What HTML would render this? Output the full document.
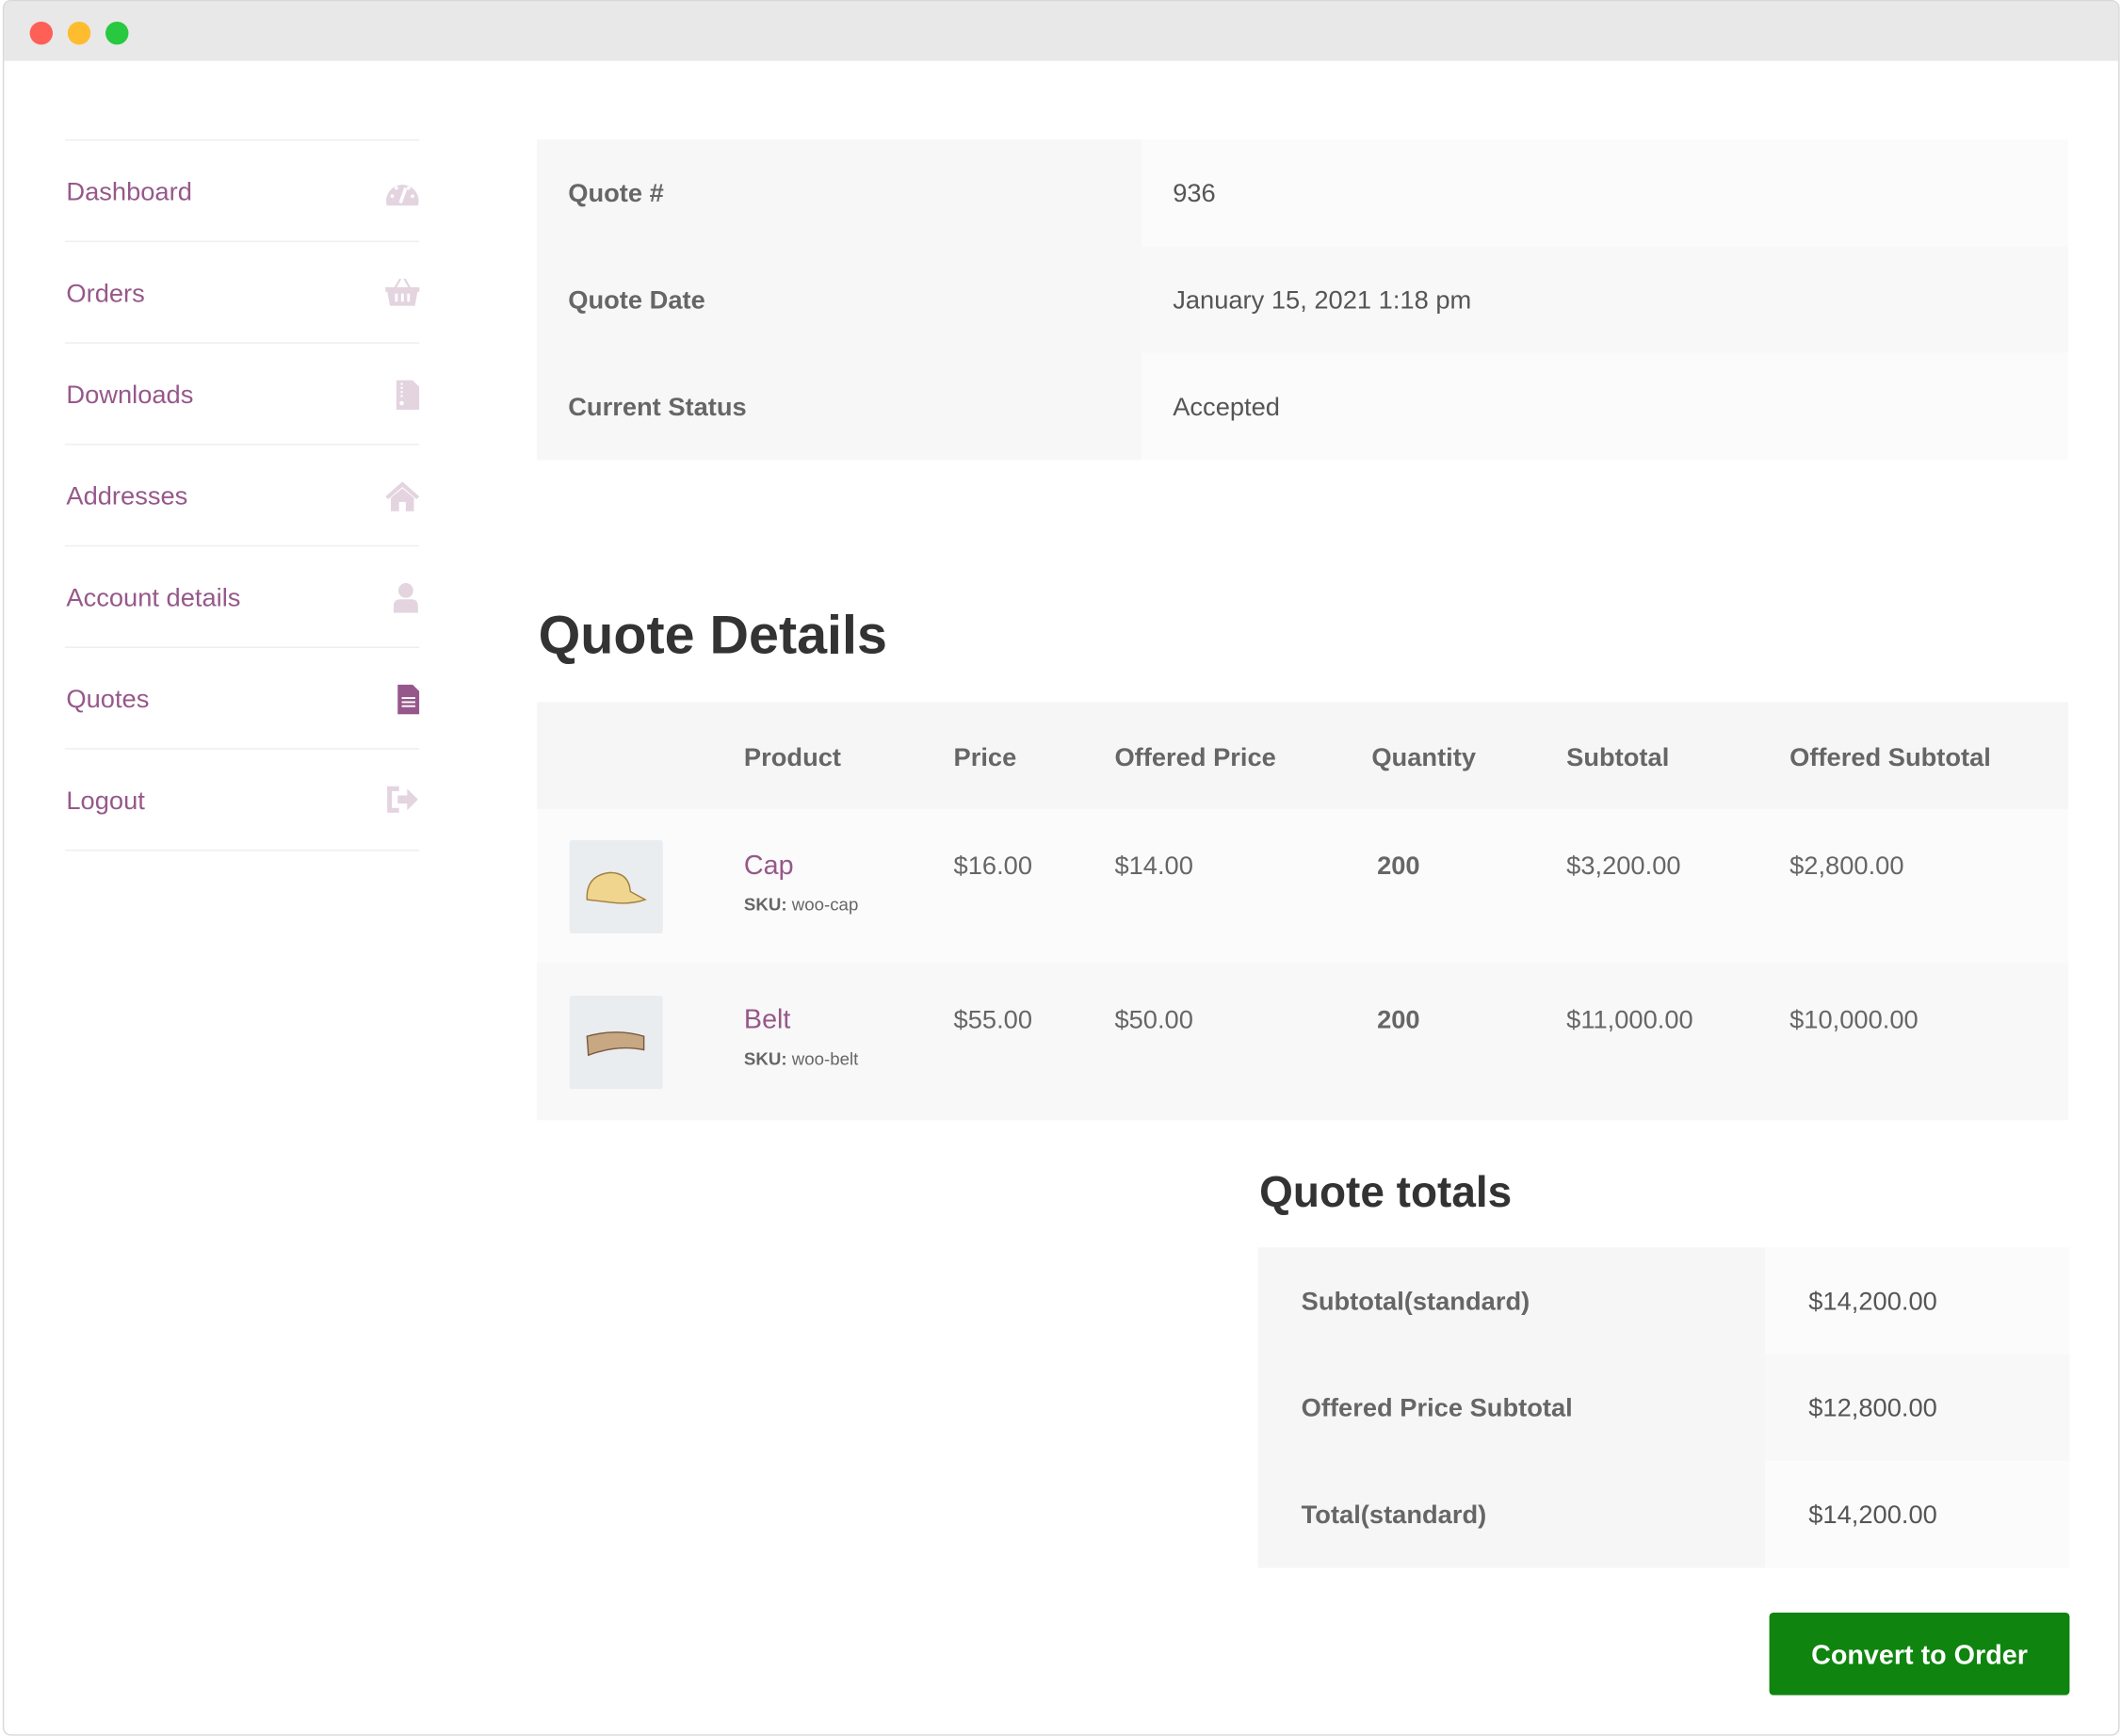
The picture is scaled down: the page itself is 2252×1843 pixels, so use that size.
<!DOCTYPE html>
<html><head><meta charset="utf-8"><style>
html,body{margin:0;padding:0;width:2252px;height:1842px;overflow:hidden;background:#fff}
#w{position:absolute;left:0;top:0;width:1568px;height:1283px;transform:scale(1.43622);transform-origin:0 0;font-family:"Liberation Sans",sans-serif;color:#555}
.frame{position:absolute;left:2px;top:0;width:1563px;height:1281px;border:1px solid #d8d8d8;border-radius:6px;background:#fff;overflow:hidden}
.bar{position:absolute;left:0;top:0;right:0;height:44px;background:#e8e8e8}
.dot{position:absolute;top:15px;width:17px;height:17px;border-radius:50%}
.nav{position:absolute;left:48px;top:103px;width:262px;border-top:1px solid #eee}
.nav div{height:74px;border-bottom:1px solid #eee;position:relative;font-size:19px;color:#96588a;line-height:78px;padding-left:1px}
.nav svg{position:absolute;right:0;top:27px}
.a{position:absolute}
table{border-collapse:collapse}
td{padding:0}
.info{position:absolute;left:397px;top:103px;width:1132px}
.info td{height:79px;font-size:19px;padding:3px 0 0 23px;box-sizing:border-box}
.info td.k{background:#f7f7f7;width:447px;font-weight:bold;color:#666}
.info td.v{background:#fbfbfb}
h2{position:absolute;margin:0;font-weight:bold;color:#333}
.prod{position:absolute;left:397px;top:519px;width:1132px;background:#fbfbfb;height:309px}
.th{position:absolute;top:519px;height:79px;background:#f6f6f6;left:397px;width:1132px}
.c{position:absolute;font-size:19px;color:#666}
.b{font-weight:bold}
.img{position:absolute;left:421px;width:69px;height:69px;background:#e9edf0;border-radius:2px}
.tot td{height:79px;font-size:19px;padding:2px 0 0 32px;box-sizing:border-box}
.tot td.k{background:#f6f6f6;width:375px;font-weight:bold;color:#666}
.tot td.v{background:#fbfbfb}
.btn{position:absolute;left:1308px;top:1192px;width:222px;height:61px;background:#0f840f;border-radius:3px;color:#fff;font-weight:bold;font-size:20px;text-align:center;line-height:64px}
</style></head><body><div id="w">
<div class="frame">
<div class="bar"></div>
<div class="dot" style="left:19px;background:#fe5f57"></div>
<div class="dot" style="left:47px;background:#febc2e"></div>
<div class="dot" style="left:75px;background:#28c840"></div>
</div>
<div class="nav">
<div>Dashboard<svg width="25" height="20" viewBox="0 0 25 20" style="top:29px"><path d="M1 19A12 12 0 1 1 24 19Z" fill="#e3d4e0"/><circle cx="5" cy="12" r="1.3" fill="#fff"/><circle cx="8" cy="6" r="1.3" fill="#fff"/><circle cx="20" cy="12" r="1.3" fill="#fff"/><circle cx="17" cy="6" r="1.3" fill="#fff"/><path d="M11 17L15 6" stroke="#fff" stroke-width="2.5"/></svg></div>
<div>Orders<svg width="25" height="20" viewBox="0 0 25 20"><path d="M0 7H25V9H23L21 20H4L2 9H0Z M7 7L11 0 M18 7L14 0" fill="#e3d4e0" stroke="#e3d4e0" stroke-width="1.5"/><path d="M8 11V17M12.5 11V17M17 11V17" stroke="#fff" stroke-width="2"/></svg></div>
<div>Downloads<svg width="25" height="22" viewBox="0 0 25 22"><path d="M8 0H20L25 5V22H8Z" fill="#e3d4e0"/><path d="M12 2V14" stroke="#fff" stroke-width="1.5" stroke-dasharray="1.5 1.5"/><circle cx="12" cy="17" r="1.6" fill="#fff"/></svg></div>
<div>Addresses<svg width="25" height="22" viewBox="0 0 25 22"><path d="M0 11L12.5 0L25 11L23 13L12.5 4L2 13Z M4 12L12.5 5L21 12V22H15V15H10V22H4Z" fill="#e3d4e0"/></svg></div>
<div>Account details<svg width="25" height="22" viewBox="0 0 25 22"><circle cx="15" cy="5.5" r="5.5" fill="#e3d4e0"/><path d="M6 22V17Q6 12 11 12H19Q24 12 24 17V22Z" fill="#e3d4e0"/></svg></div>
<div>Quotes<svg width="25" height="22" viewBox="0 0 25 22"><path d="M9 0H20L25 5V22H9Z" fill="#96588a"/><path d="M12 10H22M12 13H22M12 16H22" stroke="#fff" stroke-width="1.3"/></svg></div>
<div>Logout<svg width="25" height="20" viewBox="0 0 25 20"><path d="M10 2H3V18H10" stroke="#e3d4e0" stroke-width="3.5" fill="none"/><path d="M9 7H16V2L24 10L16 18V13H9Z" fill="#e3d4e0"/></svg></div>
</div>

<table class="info">
<tr><td class="k">Quote #</td><td class="v">936</td></tr>
<tr><td class="k">Quote Date</td><td class="v" style="background:#f8f8f8">January 15, 2021 1:18 pm</td></tr>
<tr><td class="k">Current Status</td><td class="v">Accepted</td></tr>
</table>

<h2 style="left:398px;top:448px;font-size:40px">Quote Details</h2>
<div class="prod"></div>
<div class="th"></div>
<div class="a" style="left:397px;top:712px;width:1132px;height:116px;background:#f8f8f8"></div>
<div class="c b" style="left:550px;top:550px">Product</div>
<div class="c b" style="left:705px;top:550px">Price</div>
<div class="c b" style="left:824px;top:550px">Offered Price</div>
<div class="c b" style="left:1014px;top:550px">Quantity</div>
<div class="c b" style="left:1158px;top:550px">Subtotal</div>
<div class="c b" style="left:1323px;top:550px">Offered Subtotal</div>

<div class="img" style="top:621px"><svg width="69" height="69" viewBox="0 0 69 69"><path d="M13 44Q12 26 30 24Q44 24 45 38L56 44Q45 48 30 46Z" fill="#f0d58e" stroke="#a08040" stroke-width="1"/></svg></div>
<div class="c" style="left:550px;top:629px;color:#96588a;font-size:20px">Cap</div>
<div class="c" style="left:550px;top:661px;font-size:13px"><b>SKU:</b> woo-cap</div>
<div class="c" style="left:705px;top:630px">$16.00</div>
<div class="c" style="left:824px;top:630px">$14.00</div>
<div class="c b" style="left:1018px;top:630px">200</div>
<div class="c" style="left:1158px;top:630px">$3,200.00</div>
<div class="c" style="left:1323px;top:630px">$2,800.00</div>

<div class="img" style="top:736px"><svg width="69" height="69" viewBox="0 0 69 69"><path d="M13 30Q35 24 55 30L55 40Q35 36 14 44Z" fill="#c8a882" stroke="#7a5a40" stroke-width="1"/></svg></div>
<div class="c" style="left:550px;top:743px;color:#96588a;font-size:20px">Belt</div>
<div class="c" style="left:550px;top:775px;font-size:13px"><b>SKU:</b> woo-belt</div>
<div class="c" style="left:705px;top:744px">$55.00</div>
<div class="c" style="left:824px;top:744px">$50.00</div>
<div class="c b" style="left:1018px;top:744px">200</div>
<div class="c" style="left:1158px;top:744px">$11,000.00</div>
<div class="c" style="left:1323px;top:744px">$10,000.00</div>

<h2 style="left:931px;top:863px;font-size:32px">Quote totals</h2>
<table class="tot a" style="left:930px;top:922px;width:600px">
<tr><td class="k">Subtotal(standard)</td><td class="v">$14,200.00</td></tr>
<tr><td class="k">Offered Price Subtotal</td><td class="v" style="background:#f8f8f8">$12,800.00</td></tr>
<tr><td class="k">Total(standard)</td><td class="v">$14,200.00</td></tr>
</table>
<div class="btn">Convert to Order</div>
</div></body></html>
